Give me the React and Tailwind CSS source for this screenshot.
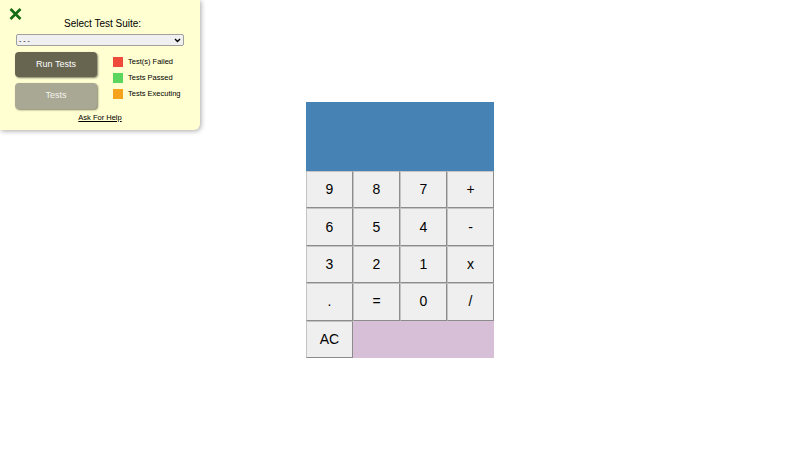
import React from "react";

const keys = ["9", "8", "7", "+", "6", "5", "4", "-", "3", "2", "1", "x", ".", "=", "0", "/"];

function Key({ label }) {
  return (
    <div className="flex items-center justify-center bg-[#efefef] border border-t-[#c4c4c4] border-l-[#c4c4c4] border-r-[#8c8c8c] border-b-[#8c8c8c] text-[14px] text-black">
      {label}
    </div>
  );
}

export default function App() {
  return (
    <div className="relative w-[800px] h-[450px] bg-white overflow-hidden" style={{ fontFamily: '"Liberation Sans", Arial, sans-serif' }}>
      {/* Test panel */}
      <div className="absolute left-0 top-0 w-[200px] h-[130px] bg-[#ffffd1] rounded-br-[6px] shadow-[1px_1px_5px_rgba(0,0,0,0.35)] flex flex-col">
        <div className="relative h-[30px]">
          <svg className="absolute left-[9px] top-[8px]" width="13" height="12" viewBox="0 0 13 12">
            <path d="M1.5 1 L11.5 11 M11.5 1 L1.5 11" stroke="#136b13" strokeWidth="2.6" strokeLinecap="butt" />
          </svg>
          <div className="absolute left-[64px] top-[18.5px] text-[10px] text-black leading-none whitespace-nowrap">Select Test Suite:</div>
        </div>
        <div className="mx-[16px] mt-[4px] h-[12px] w-[168px] bg-[#f0f0f0] border border-[#a0a0a0] rounded-[2px] flex items-center justify-between px-[2px]">
          <span className="text-[7px] leading-none text-black">- - -</span>
          <svg width="7" height="5" viewBox="0 0 7 5"><path d="M1 1 L3.5 3.5 L6 1" stroke="#000" strokeWidth="1.4" fill="none" /></svg>
        </div>
        <div className="flex mt-[6px] ml-[15px]">
          <div className="flex flex-col gap-[6px]">
            <div className="w-[82px] h-[25px] bg-[#67654f] rounded-[4px] shadow-[1px_1px_2px_rgba(0,0,0,0.5)] flex items-center justify-center text-white text-[9px]">Run Tests</div>
            <div className="w-[82px] h-[26px] bg-[#a9a894] rounded-[4px] shadow-[1px_1px_2px_rgba(0,0,0,0.5)] flex items-center justify-center text-[#f4f4ee] text-[9px]">Tests</div>
          </div>
          <div className="ml-[16px] mt-[5px] flex flex-col gap-[6px]">
            <div className="flex items-center h-[10px]">
              <div className="w-[10px] h-[10px] bg-[#f04a3c]"></div>
              <span className="ml-[5px] text-[7.5px] text-black leading-none">Test(s) Failed</span>
            </div>
            <div className="flex items-center h-[10px]">
              <div className="w-[10px] h-[10px] bg-[#5bd55b]"></div>
              <span className="ml-[5px] text-[7.5px] text-black leading-none">Tests Passed</span>
            </div>
            <div className="flex items-center h-[10px]">
              <div className="w-[10px] h-[10px] bg-[#f7a21c]"></div>
              <span className="ml-[5px] text-[7.5px] text-black leading-none">Tests Executing</span>
            </div>
          </div>
        </div>
        <div className="text-center text-[7.5px] leading-none underline text-black mt-[5px]">Ask For Help</div>
      </div>

      {/* Calculator */}
      <div className="absolute left-[306px] top-[102px] w-[188px]">
        <div className="h-[69px] bg-[#4682b4]"></div>
        <div className="grid grid-cols-4 grid-rows-[repeat(5,37.4px)]">
          {keys.map((k) => (
            <Key key={k} label={k} />
          ))}
          <Key label="AC" />
          <div className="col-span-3 bg-[#d8bfd8]"></div>
        </div>
      </div>
    </div>
  );
}
